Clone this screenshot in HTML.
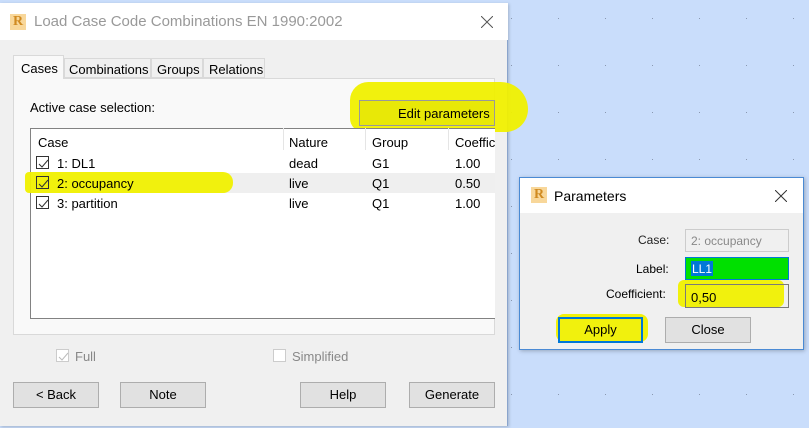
<!DOCTYPE html>
<html><head><style>
*{margin:0;padding:0;box-sizing:border-box}
body{width:809px;height:428px;overflow:hidden;position:relative;background:#c9ddfb;font-family:"Liberation Sans",sans-serif;font-size:12px;color:#000}
.a{position:absolute}
.dot{position:absolute;width:1px;height:1px;background:#8a98b0}
.btn{position:absolute;background:#e1e1e1;border:1px solid #adadad;text-align:center;font-size:13px}
.cb{position:absolute;width:13px;height:13px;border:1px solid #333;background:#fff}
.cb svg{position:absolute;left:1px;top:1px}
.hl{position:absolute;background:#f0f000;border-radius:8px;opacity:.95}
.logo{position:absolute;width:16px;height:16px;background:#f8d79a;color:#d08a20;font-weight:bold;font-size:14px;line-height:16px;text-align:center;font-family:"Liberation Serif",serif}
</style></head><body>
<div id="dots"></div>
<script>
var s='';for(var x=511;x<809;x+=47)for(var y=18;y<428;y+=47)s+='<div class="dot" style="left:'+x+'px;top:'+y+'px"></div>';document.getElementById('dots').innerHTML=s;
</script>

<div class="a" style="left:0;top:3px;width:508px;height:423px;background:#f0f0f0;border-right:1px solid #8aa4cc;box-shadow:1px 1px 3px rgba(0,0,0,.2)"></div>
<div class="a" style="left:0;top:3px;width:508px;height:37px;background:#fff"></div>
<div class="logo" style="left:10px;top:14px">R</div>
<div class="a" style="left:34px;top:13px;font-size:15px;color:#999">Load Case Code Combinations EN 1990:2002</div>
<svg class="a" style="left:481px;top:16px" width="12" height="12"><path d="M0 0L12 12M12 0L0 12" stroke="#555" stroke-width="1"/></svg>

<div class="a" style="left:13px;top:78px;width:482px;height:257px;background:#f9f9f9;border:1px solid #d9d9d9"></div>
<div class="a" style="left:13px;top:55px;width:51px;height:24px;background:#f9f9f9;border:1px solid #d9d9d9;border-bottom:none;padding:5px 0 0 7px;font-size:13px">Cases</div>
<div class="a" style="left:64px;top:58px;width:87px;height:20px;background:#f0f0f0;border:1px solid #d9d9d9;padding:3px 0 0 4px;font-size:13px">Combinations</div>
<div class="a" style="left:151px;top:58px;width:52px;height:20px;background:#f0f0f0;border:1px solid #d9d9d9;padding:3px 0 0 5px;font-size:13px">Groups</div>
<div class="a" style="left:203px;top:58px;width:62px;height:20px;background:#f0f0f0;border:1px solid #d9d9d9;padding:3px 0 0 5px;font-size:13px">Relations</div>
<div class="a" style="left:30px;top:100px;font-size:13px">Active case selection:</div>

<div class="hl" style="left:350px;top:82px;width:178px;height:50px;border-radius:20px 30px 25px 15px"></div>
<div class="a" style="left:359px;top:100px;width:136px;height:26px;border:1px solid #999;background:rgba(220,220,0,.4)"></div>
<div class="a" style="left:398px;top:106px;font-size:13px">Edit parameters</div>

<div class="a" style="left:30px;top:128px;width:465px;height:191px;background:#fff;border:1px solid #828282;border-right:none"></div>
<div class="a" style="left:38px;top:135px;font-size:13px">Case</div>
<div class="a" style="left:283px;top:128px;width:1px;height:22px;background:#e5e5e5"></div>
<div class="a" style="left:365px;top:128px;width:1px;height:22px;background:#e5e5e5"></div>
<div class="a" style="left:448px;top:128px;width:1px;height:22px;background:#e5e5e5"></div>
<div class="a" style="left:289px;top:135px;font-size:13px">Nature</div>
<div class="a" style="left:372px;top:135px;font-size:13px">Group</div>
<div class="a" style="left:455px;top:135px;width:40px;overflow:hidden;font-size:13px">Coeffic</div>
<div class="a" style="left:31px;top:173px;width:464px;height:20px;background:#efefef"></div>
<div class="hl" style="left:25px;top:172px;width:208px;height:21px;border-radius:4px 10px 10px 4px"></div>

<div class="cb" style="left:36px;top:156px"><svg width="11" height="11"><path d="M1 6L4 9L10 2" stroke="#333" fill="none"/></svg></div>
<div class="a" style="left:57px;top:156px;font-size:13px">1: DL1</div>
<div class="a" style="left:289px;top:156px;font-size:13px">dead</div>
<div class="a" style="left:372px;top:156px;font-size:13px">G1</div>
<div class="a" style="left:455px;top:156px;font-size:13px">1.00</div>

<div class="cb" style="left:36px;top:176px;background:transparent"><svg width="11" height="11"><path d="M1 6L4 9L10 2" stroke="#333" fill="none"/></svg></div>
<div class="a" style="left:57px;top:176px;font-size:13px">2: occupancy</div>
<div class="a" style="left:289px;top:176px;font-size:13px">live</div>
<div class="a" style="left:372px;top:176px;font-size:13px">Q1</div>
<div class="a" style="left:455px;top:176px;font-size:13px">0.50</div>

<div class="cb" style="left:36px;top:196px"><svg width="11" height="11"><path d="M1 6L4 9L10 2" stroke="#333" fill="none"/></svg></div>
<div class="a" style="left:57px;top:196px;font-size:13px">3: partition</div>
<div class="a" style="left:289px;top:196px;font-size:13px">live</div>
<div class="a" style="left:372px;top:196px;font-size:13px">Q1</div>
<div class="a" style="left:455px;top:196px;font-size:13px">1.00</div>

<div class="cb" style="left:56px;top:349px;border-color:#ccc"><svg width="11" height="11"><path d="M1 6L4 9L10 2" stroke="#bbb" fill="none"/></svg></div>
<div class="a" style="left:75px;top:349px;color:#888;font-size:13px">Full</div>
<div class="cb" style="left:273px;top:349px;border-color:#ccc"></div>
<div class="a" style="left:292px;top:349px;color:#888;font-size:13px">Simplified</div>
<div class="btn" style="left:13px;top:382px;width:86px;height:26px;line-height:24px">&lt; Back</div>
<div class="btn" style="left:120px;top:382px;width:86px;height:26px;line-height:24px">Note</div>
<div class="btn" style="left:300px;top:382px;width:86px;height:26px;line-height:24px">Help</div>
<div class="btn" style="left:409px;top:382px;width:86px;height:26px;line-height:24px">Generate</div>

<div class="a" style="left:519px;top:177px;width:285px;height:173px;background:#f0f0f0;border:1px solid #4a8ad4;box-shadow:1px 1px 4px rgba(0,0,0,.25)"></div>
<div class="a" style="left:520px;top:178px;width:283px;height:35px;background:#fff"></div>
<div class="logo" style="left:531px;top:187px">R</div>
<div class="a" style="left:554px;top:188px;font-size:14px">Parameters</div>
<svg class="a" style="left:775px;top:190px" width="12" height="12"><path d="M0 0L12 12M12 0L0 12" stroke="#333" stroke-width="1"/></svg>

<div class="a" style="left:638px;top:233px;color:#222">Case:</div>
<div class="a" style="left:685px;top:229px;width:104px;height:23px;border:1px solid #ccc;background:#f0f0f0;color:#888;padding:4px 0 0 5px">2: occupancy</div>
<div class="a" style="left:636px;top:262px">Label:</div>
<div class="a" style="left:685px;top:257px;width:104px;height:23px;border:1px solid #0078d7;background:#00e000"></div>
<div class="a" style="left:691px;top:261px;height:15px;background:#0078d7;color:#fff;padding:1px 1px 0">LL1</div>
<div class="hl" style="left:678px;top:280px;width:106px;height:27px;border-radius:6px"></div>
<div class="a" style="left:606px;top:287px">Coefficient:</div>
<div class="a" style="left:685px;top:284px;width:104px;height:24px;border:1px solid #7a7a7a;padding:5px 0 0 5px;font-size:13px">0,50</div>

<div class="hl" style="left:556px;top:314px;width:92px;height:28px;border-radius:8px"></div>
<div class="a" style="left:558px;top:317px;width:85px;height:26px;border:2px solid #0078d7;text-align:center;line-height:22px;font-size:13px">Apply</div>
<div class="btn" style="left:665px;top:317px;width:86px;height:26px;line-height:24px">Close</div>
</body></html>
